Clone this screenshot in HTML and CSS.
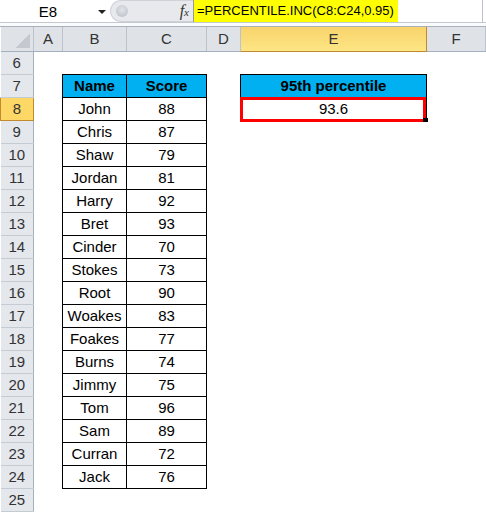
FILE: index.html
```html
<!DOCTYPE html>
<html lang="en">
<head>
    <meta charset="UTF-8">
    <title>PERCENTILE.INC</title>
    <link rel="stylesheet" href="styles.css">
</head>
<body>

<div class="formula-bar">
    <div class="name-box">
        <span class="ref">E8</span>
        <span class="arrow"></span>
    </div>
    <div class="fx-area">
        <span class="knob"></span>
        <span class="fx">f<small>x</small></span>
    </div>
    <div class="formula">
        <span class="formula-text">=PERCENTILE.INC(C8:C24,0.95)</span>
    </div>
</div>
<div class="bar-gap"></div>

<table class="sheet">
    <colgroup>
        <col style="width: 33px">
        <col style="width: 29px">
        <col style="width: 64px">
        <col style="width: 80px">
        <col style="width: 34px">
        <col style="width: 186px">
        <col>
    </colgroup>
    <thead>
        <tr class="col-head">
            <th class="corner"></th>
            <th>A</th>
            <th>B</th>
            <th>C</th>
            <th>D</th>
            <th class="sel">E</th>
            <th>F</th>
        </tr>
    </thead>
    <tbody>
        <tr><th class="row-head">6</th><td></td><td></td><td></td><td></td><td></td><td></td></tr>
        <tr><th class="row-head">7</th><td></td><td class="cell head">Name</td><td class="cell head">Score</td><td></td><td class="cell head">95th percentile</td><td></td></tr>
        <tr><th class="row-head sel">8</th><td></td><td class="cell">John</td><td class="cell">88</td><td></td><td class="cell result">93.6</td><td></td></tr>
        <tr><th class="row-head">9</th><td></td><td class="cell">Chris</td><td class="cell">87</td><td></td><td></td><td></td></tr>
        <tr><th class="row-head">10</th><td></td><td class="cell">Shaw</td><td class="cell">79</td><td></td><td></td><td></td></tr>
        <tr><th class="row-head">11</th><td></td><td class="cell">Jordan</td><td class="cell">81</td><td></td><td></td><td></td></tr>
        <tr><th class="row-head">12</th><td></td><td class="cell">Harry</td><td class="cell">92</td><td></td><td></td><td></td></tr>
        <tr><th class="row-head">13</th><td></td><td class="cell">Bret</td><td class="cell">93</td><td></td><td></td><td></td></tr>
        <tr><th class="row-head">14</th><td></td><td class="cell">Cinder</td><td class="cell">70</td><td></td><td></td><td></td></tr>
        <tr><th class="row-head">15</th><td></td><td class="cell">Stokes</td><td class="cell">73</td><td></td><td></td><td></td></tr>
        <tr><th class="row-head">16</th><td></td><td class="cell">Root</td><td class="cell">90</td><td></td><td></td><td></td></tr>
        <tr><th class="row-head">17</th><td></td><td class="cell">Woakes</td><td class="cell">83</td><td></td><td></td><td></td></tr>
        <tr><th class="row-head">18</th><td></td><td class="cell">Foakes</td><td class="cell">77</td><td></td><td></td><td></td></tr>
        <tr><th class="row-head">19</th><td></td><td class="cell">Burns</td><td class="cell">74</td><td></td><td></td><td></td></tr>
        <tr><th class="row-head">20</th><td></td><td class="cell">Jimmy</td><td class="cell">75</td><td></td><td></td><td></td></tr>
        <tr><th class="row-head">21</th><td></td><td class="cell">Tom</td><td class="cell">96</td><td></td><td></td><td></td></tr>
        <tr><th class="row-head">22</th><td></td><td class="cell">Sam</td><td class="cell">89</td><td></td><td></td><td></td></tr>
        <tr><th class="row-head">23</th><td></td><td class="cell">Curran</td><td class="cell">72</td><td></td><td></td><td></td></tr>
        <tr><th class="row-head">24</th><td></td><td class="cell">Jack</td><td class="cell">76</td><td></td><td></td><td></td></tr>
        <tr><th class="row-head">25</th><td></td><td></td><td></td><td></td><td></td><td></td></tr>
    </tbody>
</table>

</body>
</html>
```

FILE: styles.css
```css
/* Reset */
* {
    margin: 0;
    padding: 0;
    box-sizing: border-box;
}

body {
    font-family: 'Liberation Sans', Arial, sans-serif;
    background: #fff;
    color: #000;
    width: 486px;
    height: 513px;
    overflow: hidden;
}

/* Formula bar */
.formula-bar {
    display: flex;
    height: 23px;
    border-bottom: 1px solid #c4c9d0;
}

.name-box {
    width: 110px;
    display: flex;
    align-items: center;
    font-size: 15px;
}

.name-box .ref {
    width: 96px;
    text-align: center;
}

.arrow {
    width: 0;
    height: 0;
    border-left: 4px solid transparent;
    border-right: 4px solid transparent;
    border-top: 4px solid #222;
    margin-left: 2px;
    margin-top: 2px;
}

.fx-area {
    width: 83px;
    display: flex;
    align-items: center;
    justify-content: space-between;
    padding: 0 4px 0 5px;
    background: #e7e9ec;
    border: 1px solid #cfd3d9;
    border-right: none;
    border-radius: 11px 0 0 11px;
}

.knob {
    width: 12px;
    height: 12px;
    border-radius: 50%;
    background: radial-gradient(circle at 50% 40%, #e2e4e8, #b8bdc4);
}

.fx {
    font-family: 'Liberation Serif', serif;
    font-style: italic;
    font-size: 16px;
    color: #333;
}

.fx small {
    font-size: 11px;
}

.formula {
    flex: 1;
    display: flex;
    border-left: 1px solid #999;
    border-right: 1px solid #bcc2cb;
    margin-right: 3px;
}

.formula-text {
    background: #ffff00;
    font-size: 13px;
    line-height: 22px;
    padding: 0 4px 0 3px;
}

.bar-gap {
    height: 4px;
    background: #fafbfc;
    border-bottom: 1px solid #a9b0b9;
}

/* Sheet grid */
.sheet {
    width: 486px;
    border-collapse: collapse;
    table-layout: fixed;
}

.sheet th,
.sheet td {
    height: 23px;
    font-size: 15px;
    text-align: center;
    white-space: nowrap;
}

.col-head th {
    height: 24px;
    font-weight: normal;
    color: #333;
    background: #dfe3e8;
    border-right: 1px solid #bcc3cc;
    border-bottom: 1px solid #a4b0bf;
}

.col-head .corner {
    background: linear-gradient(135deg, transparent 50%, #c4c9d0 50%) no-repeat right 3px bottom 3px / 15px 15px, #dfe3e8;
}

.col-head .sel {
    background: linear-gradient(#f8d36b, #fde584);
    border-bottom-color: #c28a30;
    border-right-color: #c28a30;
}

.row-head {
    font-weight: normal;
    color: #333;
    background: #e4e7ec;
    border-right: 1px solid #a4b0bf;
    border-bottom: 1px solid #c5cbd3;
}

.row-head.sel {
    background: #fed866;
    border: 1px solid #c28a30;
}

/* Data table */
.cell {
    border: 1px solid #000;
}

.cell.head {
    background: #00b0f0;
    font-weight: bold;
}

.result {
    position: relative;
}

.result::before {
    content: "";
    position: absolute;
    top: -1px;
    left: -1px;
    right: 0;
    bottom: -2px;
    border: 3px solid #ff0000;
}

.result::after {
    content: "";
    position: absolute;
    right: -2px;
    bottom: -2px;
    width: 5px;
    height: 4px;
    background: #000;
}
```
